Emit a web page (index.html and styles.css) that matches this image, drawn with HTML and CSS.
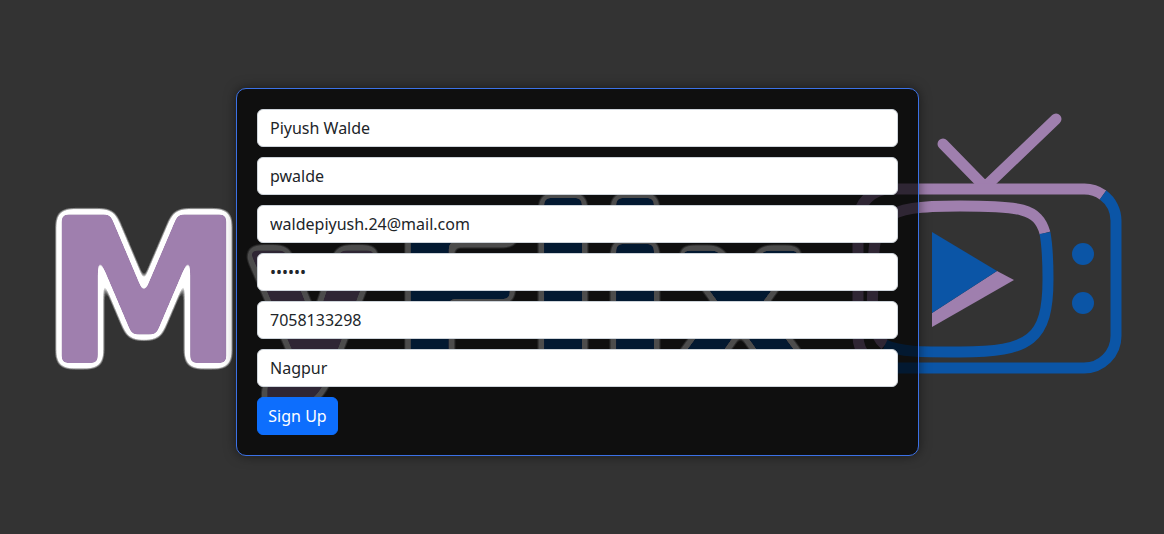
FILE: index.html
```html
<!DOCTYPE html>
<html lang="en">
<head>
    <meta charset="UTF-8">
    <meta name="viewport" content="width=device-width, initial-scale=1.0">
    <title>Sign Up</title>
    <link rel="stylesheet" href="styles.css">
</head>
<body>
    <!-- Background logo -->
    <svg class="bg-logo" viewBox="0 0 1164 534" aria-hidden="true">
        <defs>
            <!-- rounds the letter corners, then puts the white outline round them -->
            <filter id="soft-purple" filterUnits="userSpaceOnUse" x="0" y="150" width="700" height="300">
                <feGaussianBlur in="SourceAlpha" stdDeviation="3"/>
                <feComponentTransfer result="shape"><feFuncA type="linear" slope="12" intercept="-5.5"/></feComponentTransfer>
                <feGaussianBlur in="shape" stdDeviation="5"/>
                <feComponentTransfer result="wide"><feFuncA type="linear" slope="12" intercept="-0.7"/></feComponentTransfer>
                <feFlood flood-color="#ffffff"/>
                <feComposite in2="wide" operator="in" result="outline"/>
                <feFlood flood-color="#9f7fae"/>
                <feComposite in2="shape" operator="in" result="body"/>
                <feMerge><feMergeNode in="outline"/><feMergeNode in="body"/></feMerge>
            </filter>
            <filter id="soft-blue" filterUnits="userSpaceOnUse" x="300" y="150" width="600" height="300">
                <feGaussianBlur in="SourceAlpha" stdDeviation="3"/>
                <feComponentTransfer result="shape"><feFuncA type="linear" slope="12" intercept="-5.5"/></feComponentTransfer>
                <feGaussianBlur in="shape" stdDeviation="5"/>
                <feComponentTransfer result="wide"><feFuncA type="linear" slope="12" intercept="-0.7"/></feComponentTransfer>
                <feFlood flood-color="#ffffff"/>
                <feComposite in2="wide" operator="in" result="outline"/>
                <feFlood flood-color="#0b55a6"/>
                <feComposite in2="shape" operator="in" result="body"/>
                <feMerge><feMergeNode in="outline"/><feMergeNode in="body"/></feMerge>
            </filter>
        </defs>

        <text class="letter purple" x="43" y="363">M</text>
        <text class="letter purple" x="247" y="362">y</text>
        <text class="letter blue" x="392" y="362">F</text>
        <text class="letter letter-tall blue" x="526" y="362">l</text>
        <text class="letter letter-tall blue" x="598" y="362">i</text>
        <text class="letter blue" x="675" y="362">x</text>

        <path class="tv-antenna" d="M943 144L985 187L1056 119"/>
        <g class="tv-line purple-line">
            <path d="M898 368H890A32 32 0 0 1 858 336V221A32 32 0 0 1 890 189H1084A32 32 0 0 1 1103 195"/>
            <path d="M885 345C868 330 873 300 873 279C873 215 880 206 960 206C1020 206 1038 208 1045 233"/>
        </g>
        <g class="tv-line blue-line">
            <path d="M1103 195A32 32 0 0 1 1116 221V336A32 32 0 0 1 1084 368H898"/>
            <path d="M1045 233C1048 250 1048 265 1048 279C1048 340 1030 352 960 352C920 352 900 352 885 345"/>
        </g>
        <polygon class="tv-fill-purple" points="932,313 997,271 1014,280 932,327"/>
        <polygon class="tv-fill-blue" points="932,232 932,313 997,271"/>
        <circle class="tv-fill-blue" cx="1083" cy="254" r="11"/>
        <circle class="tv-fill-blue" cx="1083" cy="303" r="11"/>
    </svg>

    <form class="signup-card">
        <input type="text" class="form-input" value="Piyush Walde">
        <input type="text" class="form-input" value="pwalde">
        <input type="email" class="form-input" value="waldepiyush.24@mail.com">
        <input type="password" class="form-input" value="123456">
        <input type="text" class="form-input" value="7058133298">
        <input type="text" class="form-input" value="Nagpur">
        <button type="button" class="signup-btn">Sign Up</button>
    </form>
</body>
</html>
```

FILE: styles.css
```css
* {
    margin: 0;
    padding: 0;
    box-sizing: border-box;
    font-family: 'Noto Sans', sans-serif;
}

body {
    background: #333333;
    height: 534px;
    overflow: hidden;
    padding: 88px 0 0 236px;
    position: relative;
}

/* Logo behind the form */
.bg-logo {
    position: absolute;
    top: 0;
    left: 0;
    width: 1164px;
    height: 534px;
}

.letter {
    font-family: 'DejaVu Sans', sans-serif;
    font-weight: 700;
    font-size: 203px;
}

.letter-tall {
    font-size: 216px;
}

.purple {
    filter: url(#soft-purple);
}

.blue {
    filter: url(#soft-blue);
}

.tv-antenna {
    fill: none;
    stroke: #9f7fae;
    stroke-width: 11px;
    stroke-linecap: round;
    stroke-linejoin: round;
}

.tv-line {
    fill: none;
    stroke-width: 11px;
}

.purple-line {
    stroke: #9f7fae;
}

.blue-line {
    stroke: #0b55a6;
}

.tv-fill-purple {
    fill: #9f7fae;
}

.tv-fill-blue {
    fill: #0b55a6;
}

.signup-card {
    position: relative;
    width: 683px;
    height: 368px;
    padding: 20px;
    display: flex;
    flex-direction: column;
    align-items: flex-start;
    gap: 10px;
    background: rgba(0, 0, 0, 0.7);
    border: 1px solid #3b71e6;
    border-radius: 10px;
    box-shadow: 0 0 12px rgba(0, 0, 0, 0.5);
}

.form-input {
    width: 641px;
    height: 38px;
    padding: 6px 12px;
    background: #ffffff;
    border: 1px solid #ced4da;
    border-radius: 6px;
    color: #212529;
    font-size: 16px;
    outline: none;
}

.signup-btn {
    width: 81px;
    height: 38px;
    background: #0d6efd;
    border: 1px solid #0d6efd;
    border-radius: 6px;
    color: #ffffff;
    font-size: 16px;
    cursor: pointer;
}
```
